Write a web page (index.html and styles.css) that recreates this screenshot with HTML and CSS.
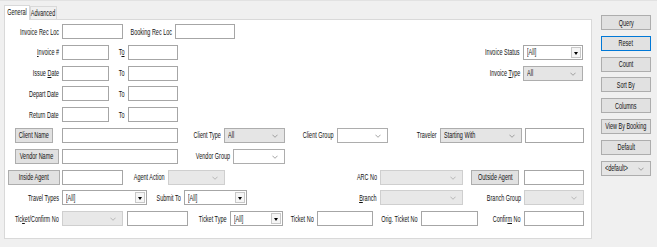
FILE: index.html
```html
<!DOCTYPE html>
<html>
<head>
<meta charset="utf-8">
<link rel="stylesheet" href="styles.css">
</head>
<body>
<div class="window">
  <div class="main">
    <div class="tabs">
      <div class="tab active"><span class="t">General</span></div>
      <div class="tab adv"><span class="t">Advanced</span></div>
    </div>
    <div class="panel">
      <div class="row">
        <span class="lbl w57"><span class="t">Invoice Rec Loc</span></span><span class="inp w61"></span>
        <span class="lbl w52"><span class="t">Booking Rec Loc</span></span><span class="inp w60"></span>
      </div>
      <div class="row">
        <span class="lbl w57"><span class="t"><u>I</u>nvoice #</span></span><span class="inp w47"></span>
        <span class="lbl w19"><span class="t">T<u>o</u></span></span><span class="inp w50"></span>
        <span class="lbl w345"><span class="t">Invoice Status</span></span><span class="cb box w60"><span class="t">[All]</span><i class="abox"></i></span>
      </div>
      <div class="row">
        <span class="lbl w57"><span class="t">Issue <u>D</u>ate</span></span><span class="inp w47"></span>
        <span class="lbl w19"><span class="t">To</span></span><span class="inp w50"></span>
        <span class="lbl w345"><span class="t">Invoice <u>T</u>ype</span></span><span class="cb gray w60"><span class="t">All</span><svg class="chev" viewBox="0 0 7 4"><polyline points="0.5,0.5 3.5,3.5 6.5,0.5"/></svg></span>
      </div>
      <div class="row">
        <span class="lbl w57"><span class="t">Depart Date</span></span><span class="inp w47"></span>
        <span class="lbl w19"><span class="t">To</span></span><span class="inp w50"></span>
      </div>
      <div class="row">
        <span class="lbl w57"><span class="t">Return Date</span></span><span class="inp w47"></span>
        <span class="lbl w19"><span class="t">To</span></span><span class="inp w50"></span>
      </div>
      <div class="row">
        <span class="sp10"></span><span class="btn w38"><span class="t">Client Name</span></span>
        <span class="inp ml9 w116"></span>
        <span class="lbl w46"><span class="t">Client Type</span></span><span class="cb gray w61"><span class="t">All</span><svg class="chev" viewBox="0 0 7 4"><polyline points="0.5,0.5 3.5,3.5 6.5,0.5"/></svg></span>
        <span class="lbl w52"><span class="t">Client Group</span></span><span class="cb white w51"><svg class="chev" viewBox="0 0 7 4"><polyline points="0.5,0.5 3.5,3.5 6.5,0.5"/></svg></span>
        <span class="lbl w52"><span class="t">Traveler</span></span><span class="cb gray w82"><span class="t">Starting With</span><svg class="chev" viewBox="0 0 7 4"><polyline points="0.5,0.5 3.5,3.5 6.5,0.5"/></svg></span>
        <span class="inp ml3 w59"></span>
      </div>
      <div class="row">
        <span class="sp10"></span><span class="btn w44"><span class="t">Vendor Name</span></span>
        <span class="inp ml3 w116"></span>
        <span class="lbl w55"><span class="t">Vendor Group</span></span><span class="cb white w52"><svg class="chev" viewBox="0 0 7 4"><polyline points="0.5,0.5 3.5,3.5 6.5,0.5"/></svg></span>
      </div>
      <div class="row">
        <span class="sp3"></span><span class="btn w52"><span class="t">Inside Agent</span></span>
        <span class="inp ml2 w61"></span>
        <span class="lbl w45"><span class="t">Agent Action</span></span><span class="cb dis w57"><svg class="chev" viewBox="0 0 7 4"><polyline points="0.5,0.5 3.5,3.5 6.5,0.5"/></svg></span>
        <span class="lbl w155"><span class="t">ARC No</span></span><span class="cb dis w83"><svg class="chev" viewBox="0 0 7 4"><polyline points="0.5,0.5 3.5,3.5 6.5,0.5"/></svg></span>
        <span class="btn ml8 w48"><span class="t">Outside Agent</span></span>
        <span class="inp ml5 w60"></span>
      </div>
      <div class="row">
        <span class="lbl w57"><span class="t">Travel Types</span></span><span class="cb box w85"><span class="t">[All]</span><i class="abox"></i></span>
        <span class="lbl w37"><span class="t">Submit To</span></span><span class="cb box w63"><span class="t">[All]</span><i class="abox"></i></span>
        <span class="lbl w133"><span class="t"><u>B</u>ranch</span></span><span class="cb dis w83"><svg class="chev" viewBox="0 0 7 4"><polyline points="0.5,0.5 3.5,3.5 6.5,0.5"/></svg></span>
        <span class="lbl w61"><span class="t">Branch Group</span></span><span class="cb dis w60"><svg class="chev" viewBox="0 0 7 4"><polyline points="0.5,0.5 3.5,3.5 6.5,0.5"/></svg></span>
      </div>
      <div class="row">
        <span class="lbl w57"><span class="t">Tic<u>k</u>et/Confirm No</span></span><span class="cb dis w61"><svg class="chev" viewBox="0 0 7 4"><polyline points="0.5,0.5 3.5,3.5 6.5,0.5"/></svg></span>
        <span class="inp ml4 w61"></span>
        <span class="lbl w42"><span class="t">Ticket Type</span></span><span class="cb box w53"><span class="t">[All]</span><i class="abox"></i></span>
        <span class="lbl w34"><span class="t">Ticket No</span></span><span class="inp w56"></span>
        <span class="lbl w48"><span class="t">Orig. Ticket No</span></span><span class="inp w57"></span>
        <span class="lbl w46"><span class="t">Confir<u>m</u> No</span></span><span class="inp w60"></span>
      </div>
    </div>
  </div>
  <div class="side">
    <span class="btn sbtn"><span class="t">Query</span></span>
    <span class="btn sbtn focus"><span class="t">Reset</span></span>
    <span class="btn sbtn"><span class="t">Count</span></span>
    <span class="btn sbtn"><span class="t">Sort By</span></span>
    <span class="btn sbtn"><span class="t">Columns</span></span>
    <span class="btn sbtn"><span class="t">View By Booking</span></span>
    <span class="btn sbtn"><span class="t">Default</span></span>
    <span class="cb gray sbtn"><span class="t">&lt;default&gt;</span><svg class="chev" viewBox="0 0 7 4"><polyline points="0.5,0.5 3.5,3.5 6.5,0.5"/></svg></span>
  </div>
</div>
</body>
</html>
```
FILE: styles.css
```css
* { box-sizing: border-box; }
html, body { margin: 0; padding: 0; }
body {
  width: 657px;
  height: 247px;
  overflow: hidden;
  background: #f0f0f0;
  font-family: "Liberation Sans", Arial, sans-serif;
  font-size: 9px;
  color: #111;
}
.t {
  display: inline-block;
  flex: none;
  white-space: nowrap;
  transform: scaleX(0.61);
}
.window {
  display: flex;
  height: 247px;
  border-top: 1px solid #e2e2e2;
}
.main {
  width: 588px;
  margin-left: 4px;
  padding-top: 3px;
  display: flex;
  flex-direction: column;
}
.tabs {
  display: flex;
  height: 15px;
  align-items: flex-end;
}
.tab {
  display: flex;
  justify-content: center;
  align-items: center;
  height: 13px;
  width: 27px;
  border: 1px solid #d9d9d9;
  border-bottom: none;
  background: #f0f0f0;
}
.tab.active {
  height: 15px;
  width: 26px;
  background: #fff;
  margin-bottom: -1px;
  position: relative;
  z-index: 1;
  padding-bottom: 2px;
}
.panel {
  height: 220px;
  background: #fff;
  border: 1px solid #d9d9d9;
  padding-top: 4px;
  display: flex;
  flex-direction: column;
  gap: 5.8px;
}
.row {
  display: flex;
  height: 15px;
  align-items: center;
}
.lbl {
  display: flex;
  flex: none;
  justify-content: flex-end;
  align-items: center;
  height: 15px;
  padding-right: 3px;
}
.lbl .t { transform-origin: right center; }
.inp, .cb, .btn {
  flex: none;
  height: 15px;
}
.inp {
  display: block;
  background: #fff;
  border: 1px solid #a6a6a6;
}
.cb {
  position: relative;
  display: flex;
  align-items: center;
  border: 1px solid #adadad;
  padding-left: 3px;
}
.cb .t { transform-origin: left center; }
.cb.gray { background: #e5e5e5; }
.cb.white { background: #fff; }
.cb.dis { background: #e8e8e8; border-color: #cfcfcf; }
.cb.box { background: #fff; border-color: #a6a6a6; }
.chev {
  position: absolute;
  right: 6px;
  top: 5px;
  width: 6px;
  height: 4px;
  fill: none;
  stroke: #8a8a8a;
  stroke-width: 0.9;
}
.cb.dis .chev { stroke: #a8a8a8; }
.abox {
  position: absolute;
  right: 1px;
  top: 1px;
  width: 10px;
  height: 11px;
  border: 1px solid #c8c8c8;
  background: #f6f6f6;
}
.abox::after {
  content: "";
  position: absolute;
  left: 2px;
  top: 4px;
  border-left: 2px solid transparent;
  border-right: 2px solid transparent;
  border-top: 3px solid #000;
}
.btn {
  display: flex;
  justify-content: center;
  align-items: center;
  background: #e1e1e1;
  border: 1px solid #adadad;
}
.btn.focus { border-color: #0078d7; }
.side {
  display: flex;
  flex-direction: column;
  padding-left: 9px;
  padding-top: 14px;
  gap: 5.8px;
}
.sbtn { width: 50px; }
.cb.sbtn { background: #e5e5e5; }
.sp3 { width: 3px; flex: none; }
.sp10 { width: 10px; flex: none; }
.ml2 { margin-left: 2px; }
.ml3 { margin-left: 3px; }
.ml4 { margin-left: 4px; }
.ml5 { margin-left: 5px; }
.ml8 { margin-left: 8px; }
.ml9 { margin-left: 9px; }
.w19 { width: 19px; }
.w34 { width: 34px; }
.w37 { width: 37px; }
.w38 { width: 38px; }
.w42 { width: 42px; }
.w44 { width: 44px; }
.w45 { width: 45px; }
.w46 { width: 46px; }
.w47 { width: 47px; }
.w48 { width: 48px; }
.w50 { width: 50px; }
.w51 { width: 51px; }
.w52 { width: 52px; }
.w53 { width: 53px; }
.w55 { width: 55px; }
.w56 { width: 56px; }
.w57 { width: 57px; }
.w59 { width: 59px; }
.w60 { width: 60px; }
.w61 { width: 61px; }
.w63 { width: 63px; }
.w82 { width: 82px; }
.w83 { width: 83px; }
.w85 { width: 85px; }
.w116 { width: 116px; }
.w133 { width: 133px; }
.w155 { width: 155px; }
.w345 { width: 345px; }
```
